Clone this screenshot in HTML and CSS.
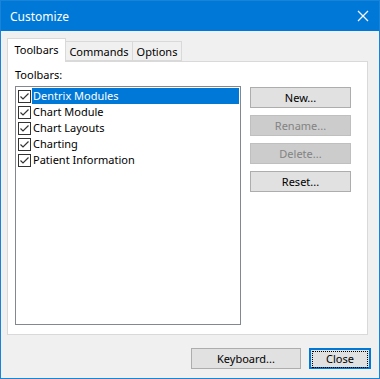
FILE: index.html
```html
<html>
    <head>
        <meta charset="UTF-8">
        <link rel="stylesheet" href="styles.css">
    </head>

    <body>
        <div class="window">
            <div class="titlebar">
                <span class="title">Customize</span>
                <svg class="close-x" width="12" height="12" viewBox="0 0 12 12">
                    <path d="M1 1 L11 11 M11 1 L1 11" stroke="#fff" stroke-width="1.2" fill="none"/>
                </svg>
            </div>

            <div class="content">
                <div class="tabs">
                    <div class="tab active">Toolbars</div>
                    <div class="tab commands">Commands</div>
                    <div class="tab options">Options</div>
                </div>

                <div class="panel">
                    <div class="label">Toolbars:</div>
                    <div class="panel-row">
                        <div class="listbox">
                            <div class="item selected"><span class="check"></span><span class="text">Dentrix Modules</span></div>
                            <div class="item"><span class="check"></span><span class="text">Chart Module</span></div>
                            <div class="item"><span class="check"></span><span class="text">Chart Layouts</span></div>
                            <div class="item"><span class="check"></span><span class="text">Charting</span></div>
                            <div class="item"><span class="check"></span><span class="text">Patient Information</span></div>
                        </div>

                        <div class="side-buttons">
                            <button class="btn">New...</button>
                            <button class="btn disabled">Rename...</button>
                            <button class="btn disabled">Delete...</button>
                            <button class="btn">Reset...</button>
                        </div>
                    </div>
                </div>

                <div class="footer">
                    <button class="btn keyboard">Keyboard...</button>
                    <button class="btn close default"><span class="focus">Close</span></button>
                </div>
            </div>
        </div>
    </body>
</html>
```

FILE: styles.css
```css
body {
    margin: 0;
    font-family: "Noto Sans", "Open Sans", sans-serif;
    font-size: 11px;
    color: #000;
}

.window {
    box-sizing: border-box;
    width: 380px;
    height: 379px;
    border: 1px solid #1883d7;
    background-color: #f0f0f0;
    display: flex;
    flex-direction: column;
}

.titlebar {
    height: 30px;
    background-color: #0078d7;
    color: #fff;
    display: flex;
    align-items: center;
    justify-content: space-between;
    padding: 0 9px 0 9px;
    flex-shrink: 0;
}

.title {
    font-size: 12px;
    padding-top: 1px;
}

.close-x {
    display: block;
    margin-right: 1px;
}

.content {
    padding: 7px 11px 0 6px;
    flex: 1;
    display: flex;
    flex-direction: column;
}

.tabs {
    display: flex;
    align-items: flex-end;
    height: 23px;
    position: relative;
    z-index: 1;
}

.tab {
    box-sizing: border-box;
    height: 20px;
    border: 1px solid #d9d9d9;
    border-left: none;
    background-color: #f0f0f0;
    text-align: center;
    line-height: 19px;
}

.tab.commands {
    width: 67px;
}

.tab.options {
    width: 49px;
}

.tab.active {
    height: 24px;
    width: 59px;
    margin-bottom: -1px;
    border: 1px solid #d9d9d9;
    border-bottom: none;
    background-color: #fff;
    line-height: 21px;
}

.panel {
    box-sizing: border-box;
    height: 274px;
    border: 1px solid #d9d9d9;
    background-color: #fff;
    padding: 4px 7px 0 7px;
}

.label {
    height: 20px;
    line-height: 18px;
    color: #000;
}

.panel-row {
    display: flex;
    align-items: flex-start;
}

.listbox {
    box-sizing: border-box;
    width: 226px;
    height: 239px;
    border: 1px solid #828790;
    padding: 1px 1px 0 2px;
}

.item {
    height: 16px;
    display: flex;
    align-items: center;
}

.check {
    box-sizing: border-box;
    width: 13px;
    height: 13px;
    border: 1px solid #333;
    background-color: #fff;
    margin-right: 1px;
    flex-shrink: 0;
    background-image: url("data:image/svg+xml;utf8,<svg xmlns='http://www.w3.org/2000/svg' width='11' height='11' viewBox='0 0 11 11'><path d='M1.5 5.5 L4 8 L9.5 2.5' stroke='%23333' stroke-width='1.2' fill='none'/></svg>");
}

.text {
    flex: 1;
    height: 16px;
    line-height: 16px;
    padding-left: 1px;
}

.item.selected .text {
    background-color: #0078d7;
    color: #fff;
}

.side-buttons {
    display: flex;
    flex-direction: column;
    gap: 7px;
    margin-left: 9px;
    padding-top: 1px;
}

.btn {
    box-sizing: border-box;
    width: 101px;
    height: 21px;
    border: 1px solid #adadad;
    background-color: #e1e1e1;
    font-family: "Noto Sans", "Open Sans", sans-serif;
    font-size: 11px;
    color: #000;
    padding: 0;
    line-height: 18px;
}

.btn.disabled {
    background-color: #cccccc;
    border-color: #bfbfbf;
    color: #838383;
}

.footer {
    display: flex;
    justify-content: flex-end;
    gap: 8px;
    margin-top: 13px;
    margin-right: -3px;
}

.btn.keyboard {
    width: 110px;
}

.btn.close {
    width: 62px;
    border: 2px solid #0078d7;
    padding: 1px;
}

.focus {
    display: block;
    height: 15px;
    line-height: 14px;
    border: 1px dotted #000;
}
```
